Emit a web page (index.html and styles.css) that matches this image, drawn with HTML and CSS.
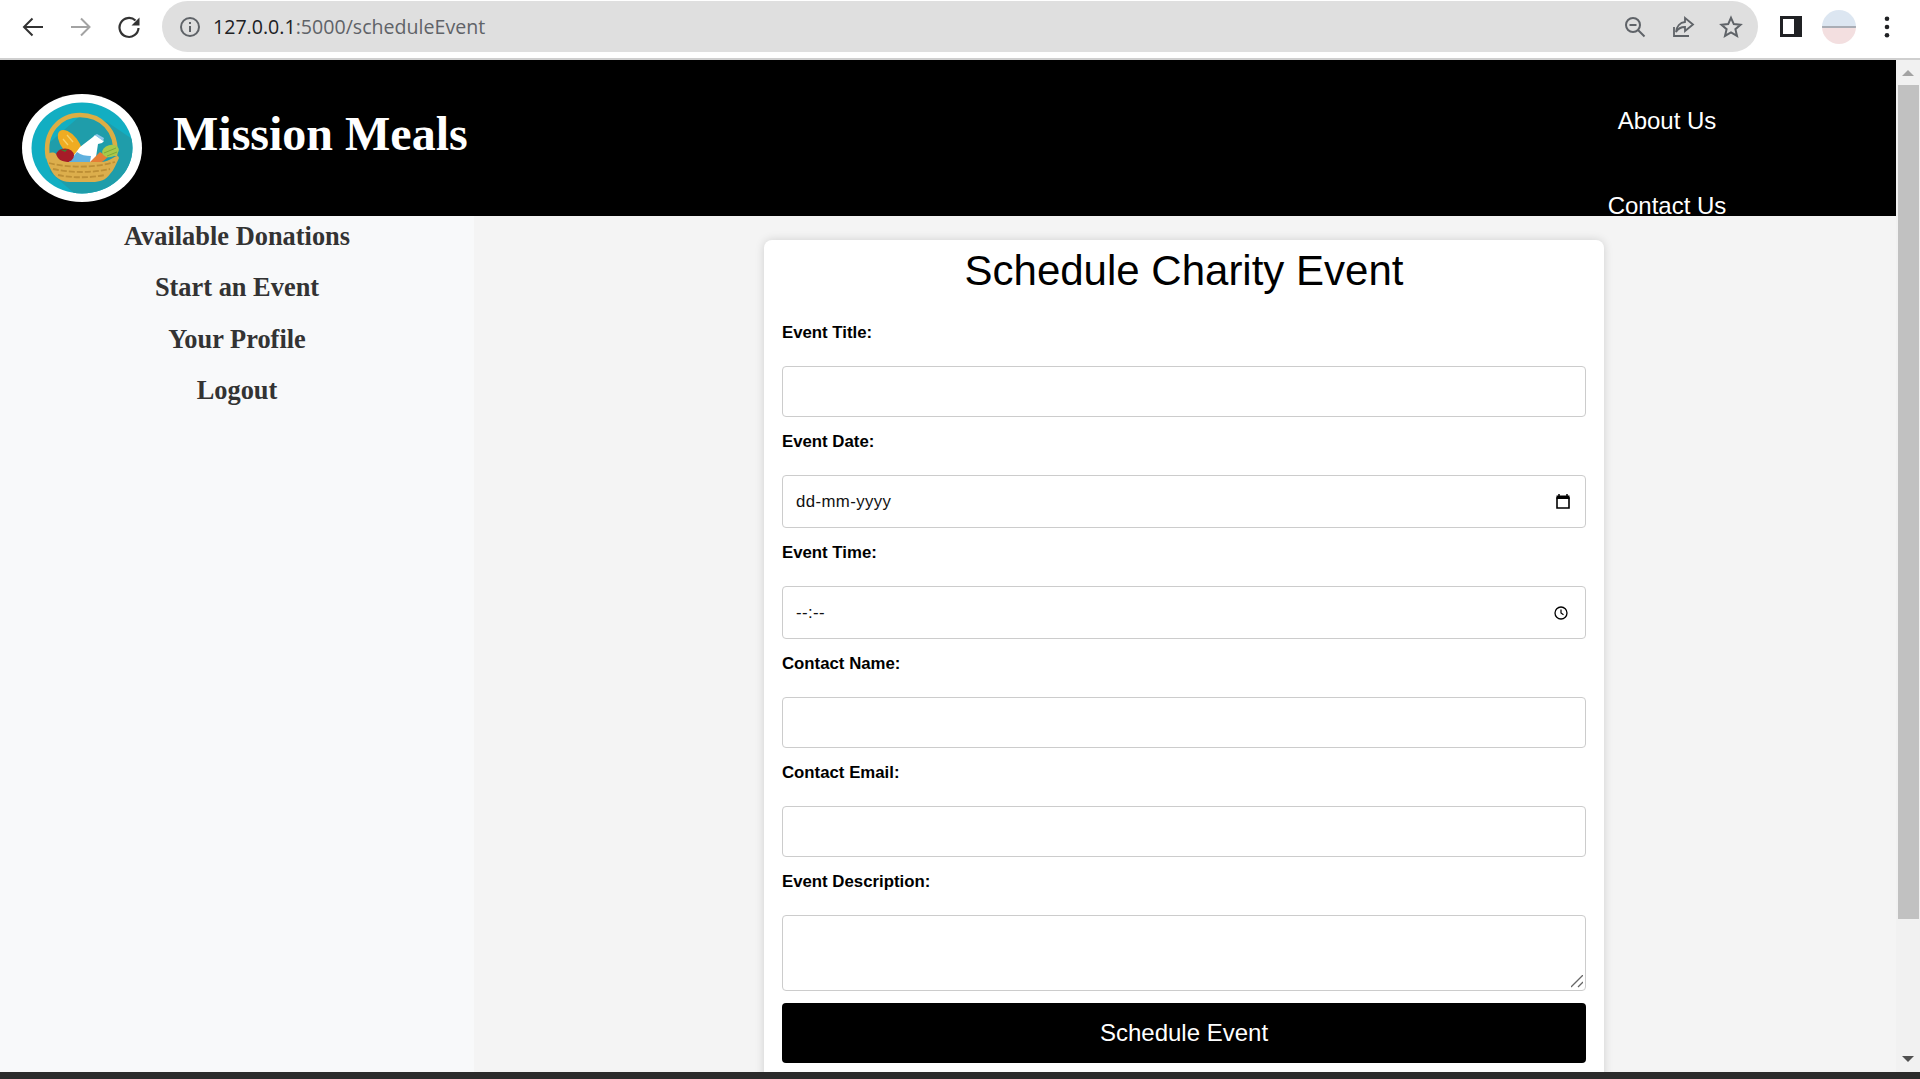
FILE: index.html
```html
<!DOCTYPE html>
<html lang="en">
<head>
<meta charset="utf-8">
<title>Schedule Charity Event</title>
<link rel="stylesheet" href="styles.css">
</head>
<body>
<div class="toolbar">
  <div class="nav-buttons">
    <svg class="tb-icon" viewBox="0 0 24 24"><path d="M23 12H4.500M12.500 3.500L4 12l8.500 8.500" fill="none" stroke="#333" stroke-width="2"/></svg>
    <svg class="tb-icon" viewBox="0 0 24 24"><path d="M3 12H21.500M13 3.500l8.500 8.500-8.500 8.500" fill="none" stroke="#a3a3a3" stroke-width="2"/></svg>
    <svg class="tb-icon" viewBox="0 0 24 24"><path d="M22.500 13A9.500 9.500 0 1 1 19.500 5.500" fill="none" stroke="#333" stroke-width="2.200"/><path d="M23.500 2.500v8h-8z" fill="#333"/></svg>
  </div>
  <div class="omnibox">
    <svg class="info" viewBox="0 0 22 22"><circle cx="11" cy="11" r="9" fill="none" stroke="#5f6368" stroke-width="2"/><path d="M11 10v6M11 6v2" stroke="#5f6368" stroke-width="2"/></svg>
    <span class="url"><span class="url-host">127.0.0.1</span>:5000/scheduleEvent</span>
    <div class="omni-actions">
      <svg class="tb-icon" viewBox="0 0 24 24"><circle cx="10" cy="10" r="7" fill="none" stroke="#5f6368" stroke-width="2"/><path d="M15 15l6.500 6.500" stroke="#5f6368" stroke-width="2"/><path d="M6.500 10h7" stroke="#5f6368" stroke-width="2"/></svg>
      <svg class="tb-icon" viewBox="0 0 24 24"><path d="M3 12v9h15" fill="none" stroke="#5f6368" stroke-width="1.800"/><path d="M14 3l8 6.500-8 6.500v-4c-4 0-7 1.500-9 5 .5-5.500 4-9.500 9-10z" fill="none" stroke="#5f6368" stroke-width="1.800"/></svg>
      <svg class="tb-icon" viewBox="0 0 24 24"><path d="M12 2.800l2.800 6.300 6.700.6-5.100 4.500 1.600 6.700L12 17.300l-6 3.600 1.600-6.700-5.100-4.500 6.700-.6z" fill="none" stroke="#5f6368" stroke-width="2"/></svg>
    </div>
  </div>
  <div class="browser-actions">
    <svg class="panel-icon" viewBox="0 0 22 22"><rect width="22" height="21" fill="#202124"/><rect x="3" y="3" width="11" height="15" fill="#fff"/></svg>
    <div class="avatar"></div>
    <svg class="kebab" viewBox="0 0 6 24"><circle cx="3" cy="3.700" r="2.300" fill="#202124"/><circle cx="3" cy="12" r="2.300" fill="#202124"/><circle cx="3" cy="20.300" r="2.300" fill="#202124"/></svg>
  </div>
</div>

<div class="viewport">
  <div class="page">
    <header class="site-header">
      <svg class="logo" viewBox="0 0 120 108">
        <defs><clipPath id="disc"><ellipse cx="60" cy="54" rx="50.500" ry="45.500"/></clipPath></defs>
        <ellipse cx="60" cy="54" rx="60" ry="54" fill="#fff"/>
        <ellipse cx="60" cy="54" rx="50.500" ry="45.500" fill="#12aec2"/>
        <path d="M26 50L58 22 85 28 125 55 70 115 28 78z" fill="#1f9daa" clip-path="url(#disc)"/>
        <path d="M26 64C21 38 38 21 58 21S96 36 93 62" fill="none" stroke="#dcae44" stroke-width="4.500"/>
        <ellipse cx="48" cy="50" rx="8.500" ry="16.500" transform="rotate(-38 48 50)" fill="#efac22"/>
        <path d="M45 41l6 7M41 45l5 6" stroke="#f8d36a" stroke-width="1.300"/>
        <path d="M47 68L58 53l13-10 2-2 9 6-2 2-4 1-2 13-1 5z" fill="#fff"/>
        <path d="M47 68l8-10c4 3 9 4 14 4l-1 6z" fill="#5fb0de"/>
        <path d="M73 41l2-1 7 4-1 3z" fill="#8cc6ea"/>
        <path d="M68 68l10-10 8 5-6 5z" fill="#e57e36"/>
        <ellipse cx="88.500" cy="57" rx="8.500" ry="6" transform="rotate(-15 88.500 57)" fill="#a8c94a"/>
        <path d="M82 59l12-5M85 62l10-4" stroke="#7fa83a" stroke-width="1"/>
        <ellipse cx="43" cy="61.500" rx="9" ry="7" fill="#a61c28"/>
        <path d="M37 55l5 1 4-1-3 3z" fill="#3f7d2f"/>
        <path d="M24 63C25 59 31 57 34 60 36 66 40 68 48 68L80 68C88 67 92 62 96 62L97 64C94 70 92 76 88 80 84 86 78 88 70 88L48 88C38 88 32 82 29 76 27 72 25 68 24 63z" fill="#dcae4c"/>
        <path d="M27 69c20 5 46 5 66-1M31 75c18 4 40 4 57 0M36 81c14 3 33 3 47 0" fill="none" stroke="#bd8f35" stroke-width="1.800" stroke-dasharray="6 2"/>
      </svg>
      <h1 class="brand">Mission Meals</h1>
      <nav class="top-nav">
        <a class="top-link">About Us</a>
        <a class="top-link">Contact Us</a>
      </nav>
    </header>
    <div class="layout">
      <aside class="sidebar">
        <a class="side-link">Available Donations</a>
        <a class="side-link">Start an Event</a>
        <a class="side-link">Your Profile</a>
        <a class="side-link">Logout</a>
      </aside>
      <main class="content">
        <form class="card">
          <h2 class="card-title">Schedule Charity Event</h2>
          <div class="field-label">Event Title:</div>
          <div class="box box-text"></div>
          <div class="field-label">Event Date:</div>
          <div class="box box-picker">
            <span class="picker-value">dd-mm-yyyy</span>
            <svg class="cal" viewBox="0 0 14 15"><path d="M1 4h12v10H1z" fill="#fff" stroke="#000" stroke-width="1.600"/><path d="M.5 1.500h13V5H.5z" fill="#000"/><path d="M3 0v2M11 0v2" stroke="#000" stroke-width="1.500"/></svg>
          </div>
          <div class="field-label">Event Time:</div>
          <div class="box box-picker">
            <span class="picker-value">--:--</span>
            <svg class="clock" viewBox="0 0 14 14"><circle cx="7" cy="7" r="6" fill="none" stroke="#000" stroke-width="1.300"/><path d="M7 3.500V7l2.500 1.800" fill="none" stroke="#000" stroke-width="1.200"/></svg>
          </div>
          <div class="field-label">Contact Name:</div>
          <div class="box box-text"></div>
          <div class="field-label">Contact Email:</div>
          <div class="box box-text"></div>
          <div class="field-label">Event Description:</div>
          <div class="box box-area">
            <svg class="grip" viewBox="0 0 12 13"><path d="M0 12L12 0M7 12l5-5" stroke="#666" stroke-width="1.300" fill="none"/></svg>
          </div>
          <button class="submit" type="button">Schedule Event</button>
        </form>
      </main>
    </div>
  </div>
  <div class="scrollbar">
    <div class="arrow-up"></div>
    <div class="thumb"></div>
    <div class="arrow-down"></div>
  </div>
</div>
<div class="taskbar"></div>
</body>
</html>
```
FILE: styles.css
```css
* { box-sizing: border-box; }
html, body { margin: 0; height: 100%; overflow: hidden; }
body { display: flex; flex-direction: column; background: #fff; font-family: "Liberation Sans", Arial, sans-serif; }

.toolbar { flex: 0 0 60px; display: flex; background: #fff; border-bottom: 2px solid #cfcfcf; padding: 1px 0 0 20px; }
.nav-buttons { display: flex; gap: 24px; align-items: center; height: 51px; width: 142px; }
.tb-icon { width: 24px; height: 24px; flex: none; }
.omnibox { width: 1596px; height: 51px; border-radius: 26px; background: #dfdfdf; display: flex; align-items: center; padding-left: 17px; }
.info { width: 22px; height: 22px; margin-right: 12px; }
.url { font-family: "Open Sans", sans-serif; font-size: 19.600px; color: #5f6368; }
.url-host { color: #202124; }
.omni-actions { margin-left: auto; display: flex; gap: 24px; margin-right: 15px; }
.browser-actions { display: flex; align-items: center; height: 51px; padding-left: 22px; }
.panel-icon { width: 22px; height: 22px; margin-right: 20px; }
.avatar { width: 34px; height: 34px; border-radius: 50%; margin-right: 28px; background: linear-gradient(#dce6f1 0 47%, #a9adb5 47% 53%, #f3dfe0 53%); }
.kebab { width: 6px; height: 24px; }

.viewport { flex: 1; display: flex; min-height: 0; }
.page { flex: 1; min-width: 0; display: flex; flex-direction: column; background: #f4f4f4; }

.site-header { flex: 0 0 156px; overflow: hidden; background: #000; display: flex; color: #fff; padding: 34px 0 0 22px; }
.logo { width: 120px; height: 108px; flex: none; }
.brand { margin: 12px 0 0 31px; font-family: "Liberation Serif", "Times New Roman", serif; font-size: 48px; font-weight: 700; line-height: 55px; }
.top-nav { margin-left: auto; width: 458px; display: flex; flex-direction: column; align-items: center; gap: 57px; margin-top: 13px; }
.top-link { font-size: 24px; line-height: 28px; color: #fff; white-space: nowrap; }

.layout { flex: 1; min-height: 0; display: flex; overflow: hidden; }
.sidebar { flex: 0 0 474px; background: #f8f9fa; display: flex; flex-direction: column; align-items: center; gap: 21px; padding-top: 4.500px; }
.side-link { font-family: "Liberation Serif", "Times New Roman", serif; font-size: 26.400px; font-weight: 700; line-height: 30.500px; color: #333; }
.content { flex: 1; display: flex; justify-content: center; padding: 24px 2px 0 0; }
.card { width: 840px; height: 900px; flex: none; background: #fff; border-radius: 8px; box-shadow: 0 0 10px rgba(0,0,0,.15); padding: 8px 18px 0 18px; }
.card-title { margin: 0 0 30px; font-size: 42px; font-weight: 400; line-height: 46px; text-align: center; color: #000; }
.field-label { font-size: 16.800px; font-weight: 700; line-height: 18px; margin: 16px 0 24px; color: #000; }
.box { border: 1px solid #ccc; border-radius: 4px; background: #fff; }
.box-text { height: 51px; }
.box-picker { height: 53px; display: flex; align-items: center; justify-content: space-between; padding: 0 15px 0 13px; }
.picker-value { font-size: 16.800px; letter-spacing: .4px; color: #111; }
.cal { width: 14px; height: 15px; }
.clock { width: 14px; height: 14px; margin-right: 2px; }
.box-area { height: 76px; position: relative; }
.grip { position: absolute; right: 2px; bottom: 2px; width: 12px; height: 13px; }
.submit { display: block; width: 100%; height: 60px; margin-top: 12px; background: #000; color: #fff; border: 0; border-radius: 4px; font: 24px "Liberation Sans", Arial, sans-serif; }

.scrollbar { flex: 0 0 24px; background: #f1f1f1; display: flex; flex-direction: column; align-items: center; position: relative; padding-top: 25px; }
.arrow-up { position: absolute; top: 10px; border: 6px solid transparent; border-top: 0; border-bottom: 6px solid #a3a3a3; }
.thumb { width: 21px; height: 834px; background: #c1c1c1; }
.arrow-down { position: absolute; bottom: 10px; border: 6px solid transparent; border-bottom: 0; border-top: 6px solid #505050; }
.taskbar { flex: 0 0 7px; background: #2b2b2b; }
```
